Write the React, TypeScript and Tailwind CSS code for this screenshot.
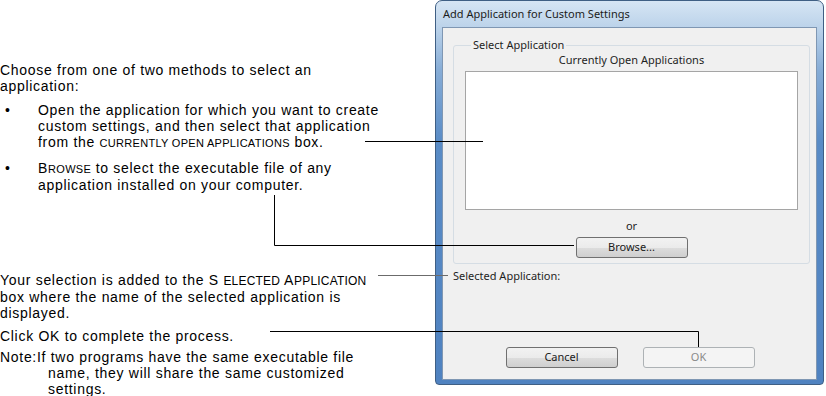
import React from 'react';

const doc = { fontFamily: '"Liberation Sans", Arial, sans-serif' };
const ui = { fontFamily: '"Noto Sans", "Open Sans", sans-serif' };

const Sc = ({ children }: { children: React.ReactNode }) => <span className="text-[11px] tracking-[0.3px]">{children}</span>;
const ScWide = ({ children }: { children: React.ReactNode }) => <span className="text-[12px] tracking-[0.2px]">{children}</span>;

const Callouts = () => (
  <svg className="absolute inset-0 pointer-events-none" width={826} height={396}>
    <path d="M365 141.5H483" stroke="#000" strokeWidth="1" fill="none" />
    <path d="M274.5 195V245.5H574" stroke="#000" strokeWidth="1" fill="none" />
    <path d="M378 275.5H448" stroke="#6b6b6b" strokeWidth="1" fill="none" />
    <path d="M270 331.5H698.5V347" stroke="#000" strokeWidth="1" fill="none" />
  </svg>
);

const WinButton = ({ label, disabled }: { label: string; disabled?: boolean }) => (
  <div
    className={`w-[112px] h-[21px] rounded-[3px] border flex items-center justify-center text-[11px] ${
      disabled
        ? 'border-[#adb2b5] bg-[#f4f4f4] text-[#8a8a8a]'
        : 'border-[#707070] bg-[linear-gradient(to_bottom,#f2f2f2_0%,#ebebeb_50%,#dddddd_51%,#cfcfcf_100%)] text-[#1a1a1a]'
    }`}
  >
    {label}
  </div>
);

export default function App() {
  return (
    <div className="relative w-[826px] h-[396px] bg-white flex overflow-hidden">
      <div className="w-[435px] shrink-0 text-[14px] leading-[16px] tracking-[0.7px] text-black whitespace-nowrap" style={doc}>
        <p className="mt-[62px]">Choose from one of two methods to select an<br />application:</p>
        <ul className="mt-[8px] space-y-[9px]">
          <li className="flex">
            <span className="w-[38px] pl-[5px] shrink-0">•</span>
            <span>
              Open the application for which you want to create<br />
              custom settings, and then select that application<br />
              from the <Sc>CURRENTLY OPEN APPLICATIONS</Sc> box.
            </span>
          </li>
          <li className="flex">
            <span className="w-[38px] pl-[5px] shrink-0">•</span>
            <span>
              B<Sc>ROWSE</Sc> to select the executable file of any<br />
              application installed on your computer.
            </span>
          </li>
        </ul>
        <p className="mt-[79px]">
          Your selection is added to the S <ScWide>ELECTED</ScWide> A<ScWide>PPLICATION</ScWide><br />
          box where the name of the selected application is<br />
          displayed.
        </p>
        <p className="mt-[7px]">Click OK to complete the process.</p>
        <p className="mt-[5px]">
          Note:If two programs have the same executable file<br />
          <span className="pl-[48px]">name, they will share the same customized</span><br />
          <span className="pl-[48px]">settings.</span>
        </p>
      </div>

      <div
        className="w-[389px] h-[385px] shrink-0 rounded-t-[7px] rounded-b-[4px] border border-[#3f5f84] bg-[linear-gradient(to_bottom,#d6e5f4_0px,#bcd3ea_26px,#86acd6_70px,#5a8cc6_140px,#4f82c0_100%)] flex flex-col px-[6px] pb-[4px]"
        style={ui}
      >
        <div className="h-[26px] flex items-center pl-[1px] text-[11px] text-[#1c1c1c]">Add Application for Custom Settings</div>
        <div className="flex-1 border border-[#7f97b3] bg-[#f0f0f0] flex flex-col text-[11px] text-[#1e1e1e]">
          <fieldset className="mt-[9px] ml-[10px] mr-[9px] border border-[#d5dde4] rounded-[3px] flex flex-col items-center px-[11px] pb-[5px]">
            <legend className="ml-[6px] px-[2px] leading-[16px]">Select Application</legend>
            <div className="leading-[14px]">Currently Open Applications</div>
            <div className="mt-[4px] w-[333px] h-[139px] bg-white border border-[#a5a5a5]" />
            <div className="mt-[8px] leading-[16px]">or</div>
            <div className="mt-[3px]"><WinButton label="Browse..." /></div>
          </fieldset>
          <div className="mt-[4px] ml-[10px] leading-[16px]">Selected Application:</div>
          <div className="mt-auto mb-[11px] flex justify-center gap-[25px] pl-[1px]">
            <WinButton label="Cancel" />
            <WinButton label="OK" disabled />
          </div>
        </div>
      </div>

      <Callouts />
    </div>
  );
}
